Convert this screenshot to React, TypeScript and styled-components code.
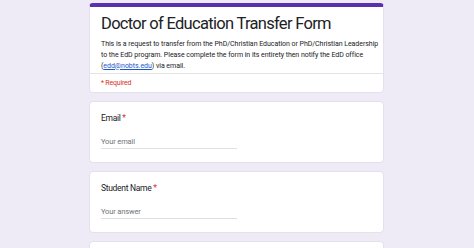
import React from "react";
import styled, { createGlobalStyle } from "styled-components";

const Global = createGlobalStyle`
  html, body { margin: 0; padding: 0; background: #eeebf7; }
  body { font-family: Roboto, "Noto Sans", sans-serif; }
`;

const Page = styled.div`
  width: 474px;
  height: 248px;
  overflow: hidden;
  background: #eeebf7;
  padding: 3px 0 0 89px;
  box-sizing: border-box;
`;

const Column = styled.div`
  width: 295px;
  display: flex;
  flex-direction: column;
  gap: 8px;
`;

const Card = styled.div<{ $accent?: boolean; $h?: number }>`
  background: #ffffff;
  border-radius: 4px;
  border: 1px solid #e4e0ee;
  border-top: ${(p) => (p.$accent ? "4px solid #5a30ad" : "1px solid #e4e0ee")};
  box-sizing: border-box;
  height: ${(p) => (p.$h ? `${p.$h}px` : "auto")};
  display: flex;
  flex-direction: column;
  flex-shrink: 0;
`;

const Header = styled.div`
  padding: 6px 4px 1px 11px;
  border-bottom: 1px solid #e3e3e3;
`;

const Title = styled.h1`
  margin: 0;
  font-family: Roboto, sans-serif;
  font-weight: 400;
  font-size: 16.5px;
  letter-spacing: -0.7px;
  line-height: 22px;
  color: #202124;
  white-space: nowrap;
`;

const Desc = styled.div`
  margin: 3.5px 0 0;
  display: flex;
  flex-direction: column;
`;

const DescLine = styled.span`
  font-size: 7px;
  letter-spacing: -0.04px;
  line-height: 11px;
  color: #202124;
  white-space: nowrap;
`;

const Mail = styled.a`
  color: #1a56c8;
  text-decoration: underline;
`;

const Required = styled.div`
  padding: 4px 11px;
  font-size: 7px;
  letter-spacing: -0.2px;
  line-height: 10px;
  color: #d93025;
`;

const Body = styled.div`
  padding: 10px 11px 0;
`;

const Label = styled.div`
  font-size: 8.5px;
  letter-spacing: -0.3px;
  line-height: 12px;
  color: #202124;
`;

const Star = styled.span`
  color: #d93025;
`;

const Input = styled.div`
  margin-top: 13px;
  width: 136px;
  font-size: 7.5px;
  letter-spacing: -0.15px;
  line-height: 10px;
  color: #70757a;
  padding-bottom: 1px;
  border-bottom: 1px solid #e0e0e0;
`;

export default function App() {
  return (
    <>
      <Global />
      <Page>
        <Column>
          <Card $accent $h={90}>
            <Header>
              <Title>Doctor of Education Transfer Form</Title>
              <Desc>
                <DescLine>
                  This is a request to transfer from the PhD/Christian Education or PhD/Christian Leadership
                </DescLine>
                <DescLine>
                  to the EdD program. Please complete the form in its entirety then notify the EdD office
                </DescLine>
                <DescLine>
                  (<Mail>edd@nobts.edu</Mail>) via email.
                </DescLine>
              </Desc>
            </Header>
            <Required>* Required</Required>
          </Card>
          <Card $h={62}>
            <Body>
              <Label>
                Email <Star>*</Star>
              </Label>
              <Input>Your email</Input>
            </Body>
          </Card>
          <Card $h={62}>
            <Body>
              <Label>
                Student Name <Star>*</Star>
              </Label>
              <Input>Your answer</Input>
            </Body>
          </Card>
          <Card $h={40} />
        </Column>
      </Page>
    </>
  );
}
